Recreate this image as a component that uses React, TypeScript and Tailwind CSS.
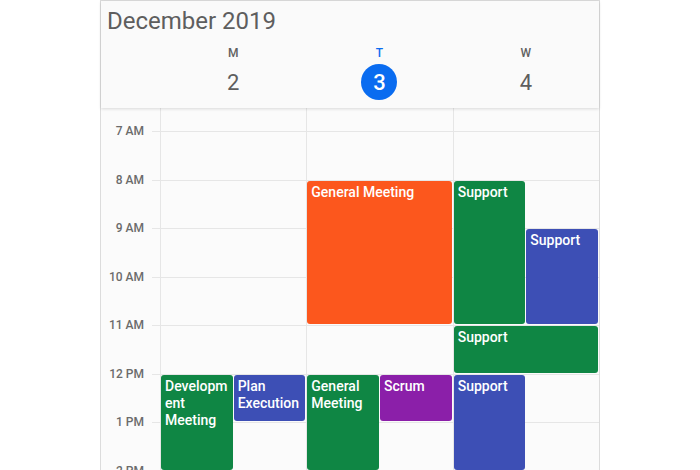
const HOUR = 48.5;
const TOP = 23;
const START = 7;

const hours = ["7 AM", "8 AM", "9 AM", "10 AM", "11 AM", "12 PM", "1 PM", "2 PM"];

type Appt = {
  title: string;
  start: number;
  end: number;
  color: string;
  slot: number;
  slots: number;
};

const days: { letter: string; date: number; today?: boolean; appts: Appt[] }[] = [
  {
    letter: "M",
    date: 2,
    appts: [
      { title: "Development Meeting", start: 12, end: 14, color: "bg-[#0f8644]", slot: 0, slots: 2 },
      { title: "Plan Execution", start: 12, end: 13, color: "bg-[#3d4fb5]", slot: 1, slots: 2 },
    ],
  },
  {
    letter: "T",
    date: 3,
    today: true,
    appts: [
      { title: "General Meeting", start: 8, end: 11, color: "bg-[#fc571d]", slot: 0, slots: 1 },
      { title: "General Meeting", start: 12, end: 14, color: "bg-[#0f8644]", slot: 0, slots: 2 },
      { title: "Scrum", start: 12, end: 13, color: "bg-[#8b1fa9]", slot: 1, slots: 2 },
    ],
  },
  {
    letter: "W",
    date: 4,
    appts: [
      { title: "Support", start: 8, end: 11, color: "bg-[#0f8644]", slot: 0, slots: 2 },
      { title: "Support", start: 9, end: 11, color: "bg-[#3d4fb5]", slot: 1, slots: 2 },
      { title: "Support", start: 11, end: 12, color: "bg-[#0f8644]", slot: 0, slots: 1 },
      { title: "Support", start: 12, end: 14, color: "bg-[#3d4fb5]", slot: 0, slots: 2 },
    ],
  },
];

function Appointment({ a }: { a: Appt }) {
  const top = TOP + (a.start - START) * HOUR + 1;
  const height = (a.end - a.start) * HOUR - 2;
  const pct = 100 / a.slots;
  return (
    <div
      className={`absolute ${a.color} rounded-[3px] pl-[4px] pr-[2px] pt-[3px] text-white text-[14px] leading-[17px] font-medium break-words overflow-hidden`}
      style={{
        top,
        height,
        left: `${pct * a.slot}%`,
        width: `calc(${pct}% - 1px)`,
      }}
    >
      {a.title}
    </div>
  );
}

export default function App() {
  return (
    <div className="w-[700px] h-[470px] bg-white flex justify-center overflow-hidden font-['Roboto',sans-serif]">
      <div className="w-[500px] h-[470px] border-x border-t border-[#dcdcdc] bg-[#fafafa] flex flex-col">
        {/* Header */}
        <div className="relative z-10 h-[107px] shrink-0 bg-[#fafafa] shadow-[0_1px_3px_rgba(0,0,0,0.14)]">
          <div className="pl-[6px] pt-[6px] text-[24px] leading-[28px] text-[#5e5e5e]">December 2019</div>
          <div className="flex mt-[10px]">
            <div className="w-[59px] shrink-0" />
            {days.map((d) => (
              <div key={d.letter} className="flex-1 flex flex-col items-center">
                <div
                  className={`text-[12px] leading-[16px] font-medium ${
                    d.today ? "text-[#0a6cf0]" : "text-[#616161]"
                  }`}
                >
                  {d.letter}
                </div>
                <div
                  className={`mt-[3px] w-[36px] h-[36px] rounded-full flex items-center justify-center text-[22px] ${
                    d.today ? "bg-[#0a6cf0] text-white font-medium" : "text-[#5e5e5e]"
                  }`}
                >
                  {d.date}
                </div>
              </div>
            ))}
          </div>
        </div>

        {/* Time grid */}
        <div className="flex flex-1 overflow-hidden bg-[#fbfbfb]">
          <div className="w-[59px] shrink-0">
            <div className="h-[23px]" />
            {hours.map((h) => (
              <div key={h} className="relative h-[48.5px]">
                <div className="absolute right-[16px] top-0 -translate-y-1/2 text-[12px] leading-[14px] font-medium text-[#6b6b6b]">
                  {h}
                </div>
                <div className="absolute right-0 top-0 w-[8px] border-t border-[#e6e6e6]" />
              </div>
            ))}
          </div>
          {days.map((d) => (
            <div key={d.letter} className="relative flex-1 border-l border-[#e6e6e6]">
              <div className="h-[23px]" />
              {hours.map((h) => (
                <div key={h} className="h-[48.5px] border-t border-[#e6e6e6]" />
              ))}
              {d.appts.map((a, i) => (
                <Appointment key={i} a={a} />
              ))}
            </div>
          ))}
        </div>
      </div>
    </div>
  );
}
